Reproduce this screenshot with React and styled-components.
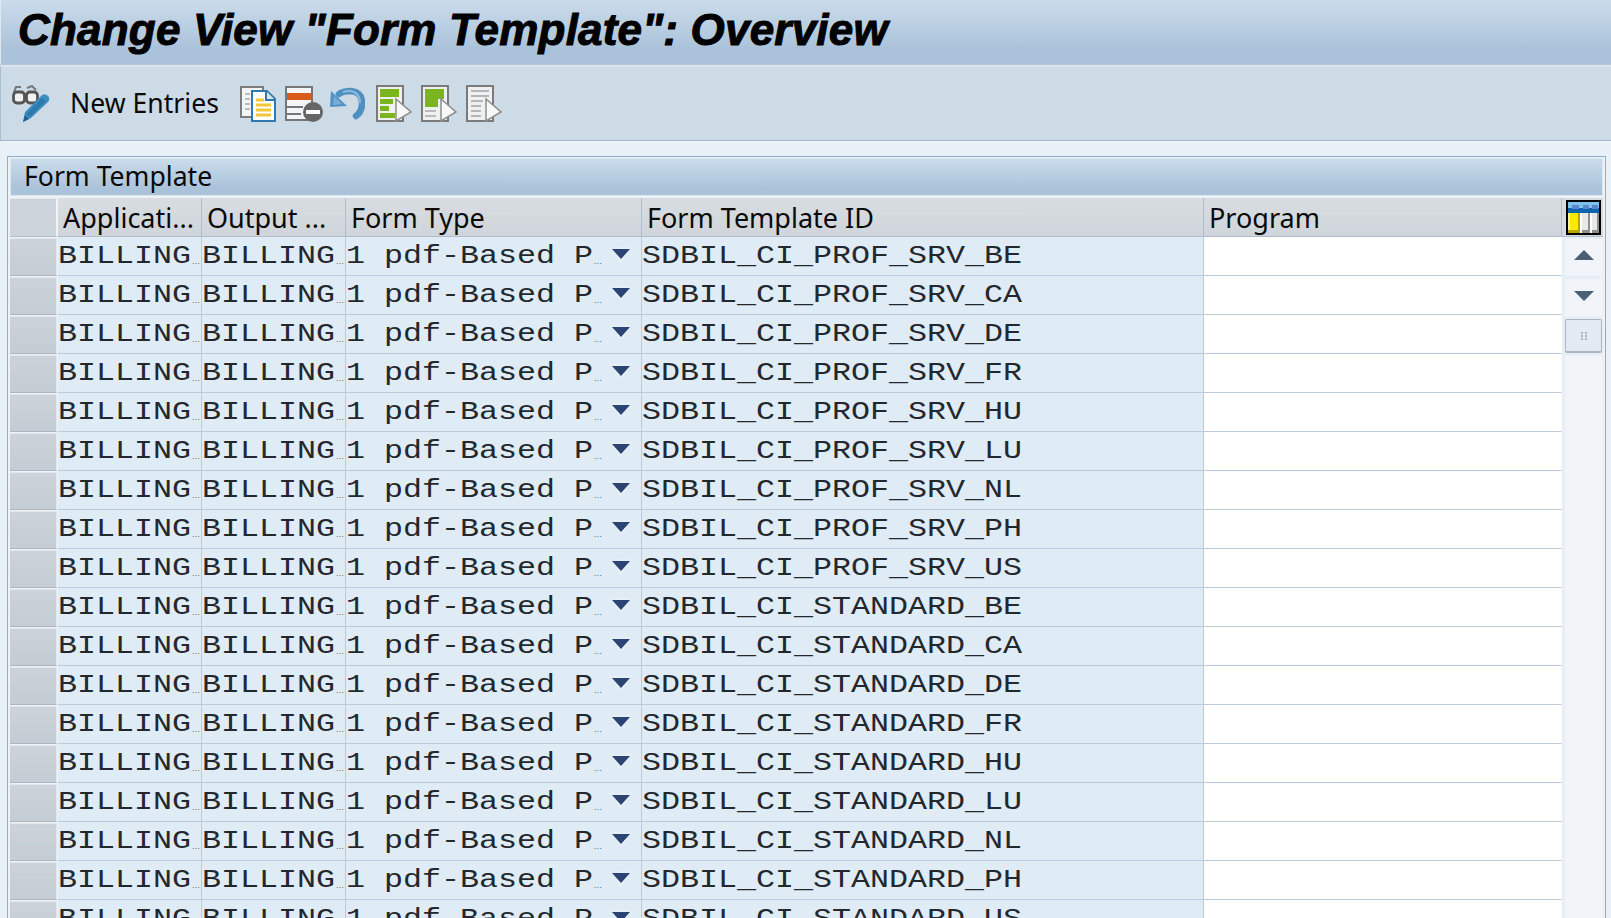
import styled, { createGlobalStyle } from "styled-components"

const countries = ["BE", "CA", "DE", "FR", "HU", "LU", "NL", "PH", "US"]
const templates = [
    ...countries.map(c => `SDBIL_CI_PROF_SRV_${c}`),
    ...countries.map(c => `SDBIL_CI_STANDARD_${c}`),
]

const GlassesIcon = () => (
    <svg width="38" height="38" viewBox="0 0 38 38">
        <path d="M2 7 L4 2 L9 2 M15 3 L20 1 L24 5" fill="none" stroke="#777" strokeWidth="2" />
        <rect x="1.5" y="7" width="11" height="11" rx="3.5" fill="#f1f1f1" stroke="#555" strokeWidth="2.8" />
        <rect x="14.5" y="7" width="11" height="11" rx="3.5" fill="#f1f1f1" stroke="#555" strokeWidth="2.8" />
        <path d="M12 10 H15" stroke="#555" strokeWidth="2.4" />
        <path d="M11 37 L13 27 L30 10 Q34 8 37 12 Q38 15 36 17 L19 33 Z" fill="#3f8ec2" />
        <path d="M14 29 L30 13 L34 16 L18 32 Z" fill="#2d78ac" />
        <path d="M11 37 L13 30 L17 34 Z" fill="#1d5f8e" />
    </svg>
)

const CopyIcon = () => (
    <svg width="36" height="36" viewBox="0 0 36 36">
        <path d="M1 1 H23 V6 H12 V31 H1 Z" fill="#f3f5f6" stroke="#7c7c7c" strokeWidth="2" />
        <path d="M5 8 H10 M5 13 H10 M5 18 H10 M5 23 H10" stroke="#bdbdbd" strokeWidth="2" />
        <path d="M12 5 H27 L35 13 V35 H12 Z" fill="#fff" stroke="#2f79b0" strokeWidth="2" />
        <path d="M26 5 V14 H35" fill="#d6e6f1" stroke="#2f79b0" strokeWidth="2" />
        <path d="M16 14 H24 M16 19 H31 M16 24 H31 M16 29 H31" stroke="#f4c63c" strokeWidth="3" />
    </svg>
)

const DeleteIcon = () => (
    <svg width="38" height="36" viewBox="0 0 38 36">
        <rect x="1" y="1" width="26" height="33" fill="#f4f5f6" stroke="#777" strokeWidth="2" />
        <rect x="2" y="7" width="24" height="7" fill="#d95b1c" />
        <path d="M2 21 H18 M2 28 H16" stroke="#777" strokeWidth="2" />
        <circle cx="28" cy="26" r="10" fill="#666" />
        <rect x="21" y="24" width="14" height="4" fill="#fff" />
    </svg>
)

const UndoIcon = () => (
    <svg width="36" height="36" viewBox="0 0 36 36">
        <path d="M10 8 Q14 5 22 5 Q33 6 33 17 Q33 26 27 30" fill="none" stroke="#4f8fc0" strokeWidth="6.5" strokeLinecap="round" />
        <path d="M14 6 Q20 4 25 6 Q31 9 31 17" fill="none" stroke="#8db9da" strokeWidth="2" />
        <path d="M1 21 L2 5 L18 20 Z" fill="#4f93c6" />
        <path d="M4 19 L5 10 L13 18 Z" fill="#78afd6" />
    </svg>
)

const SelectIcon = ({ $fill }) => (
    <svg width="36" height="37" viewBox="0 0 36 37">
        <rect x="1" y="1" width="26" height="35" fill="#eef0f1" stroke="#7a7a7a" strokeWidth="2" />
        {$fill === "all" && (
            <>
                <rect x="4" y="4" width="19" height="8" fill="#7ab51d" />
                <rect x="4" y="14" width="13" height="5" fill="#7ab51d" />
                <rect x="4" y="21" width="9" height="5" fill="#7ab51d" />
                <rect x="4" y="28" width="15" height="5" fill="#7ab51d" />
            </>
        )}
        {$fill === "block" && (
            <>
                <path d="M4 4 H23 V14 H17 V22 H4 Z" fill="#7ab51d" />
                <path d="M4 26 H15 M4 31 H15" stroke="#b9b9b9" strokeWidth="2" />
            </>
        )}
        {$fill === "none" && (
            <path d="M5 6 H23 M5 11 H23 M5 16 H17 M5 21 H15 M5 26 H15 M5 31 H15" stroke="#b5b5b5" strokeWidth="2" />
        )}
        <path d="M20 14 L35 27 L20 36 Z" fill="#f7f8f8" stroke="#8d8d8d" strokeWidth="1.5" />
    </svg>
)

const ColumnsIcon = () => (
    <svg width="35" height="35" viewBox="0 0 35 35" shapeRendering="crispEdges">
        <rect width="35" height="35" fill="#000" />
        <rect x="2" y="2" width="31" height="31" fill="#fff" />
        <rect x="2" y="2" width="31" height="8" fill="#7cc0ec" />
        <rect x="2" y="8" width="31" height="5" fill="#0e65ae" />
        <rect x="6" y="5" width="7" height="4" fill="#5b86c9" />
        <rect x="17" y="5" width="6" height="4" fill="#5b86c9" />
        <rect x="26" y="5" width="6" height="4" fill="#5b86c9" />
        <rect x="2" y="13" width="12" height="20" fill="#ffe800" />
        <rect x="2" y="13" width="2" height="20" fill="#f3f0a0" />
        <rect x="2" y="30" width="12" height="3" fill="#b8a400" />
        <rect x="12" y="13" width="2" height="20" fill="#b8a400" />
        <rect x="16" y="13" width="6" height="20" fill="#e6e8ea" />
        <rect x="22" y="13" width="2" height="20" fill="#8f8f8f" />
        <rect x="16" y="30" width="6" height="3" fill="#8f8f8f" />
        <rect x="26" y="13" width="5" height="20" fill="#e6e8ea" />
        <rect x="31" y="13" width="2" height="20" fill="#8f8f8f" />
        <rect x="26" y="30" width="5" height="3" fill="#8f8f8f" />
    </svg>
)

// the reference font is wider than Liberation Mono, so the glyphs get stretched to its 19px pitch
const MonoText = ({ children }) => (
    <Mono $chars={children.length}><Stretched>{children}</Stretched></Mono>
)

const App = () => {
    return (
        <Page>
            <GlobalStyle />
            <TitleBar>
                <Title>Change View "Form Template": Overview</Title>
            </TitleBar>
            <Toolbar>
                <ToolIcon $gap={20}><GlassesIcon /></ToolIcon>
                <ToolText>New Entries</ToolText>
                <ToolIcon $gap={9}><CopyIcon /></ToolIcon>
                <ToolIcon $gap={6}><DeleteIcon /></ToolIcon>
                <ToolIcon $gap={11}><UndoIcon /></ToolIcon>
                <ToolIcon $gap={9}><SelectIcon $fill="all" /></ToolIcon>
                <ToolIcon $gap={9}><SelectIcon $fill="block" /></ToolIcon>
                <ToolIcon><SelectIcon $fill="none" /></ToolIcon>
            </Toolbar>
            <Panel>
                <PanelTitle>Form Template</PanelTitle>
                <HeaderRow>
                    <Corner />
                    <HeadCell>Applicati...</HeadCell>
                    <HeadCell>Output ...</HeadCell>
                    <HeadCell>Form Type</HeadCell>
                    <HeadCell>Form Template ID</HeadCell>
                    <HeadCell>Program</HeadCell>
                    <ConfigCell><ColumnsIcon /></ConfigCell>
                </HeaderRow>
                <Body>
                    <Rows>
                        {templates.map(id => (
                            <Row key={id}>
                                <RowHead />
                                <Cell><MonoText>BILLING</MonoText><Dots>...</Dots></Cell>
                                <Cell><MonoText>BILLING</MonoText><Dots>...</Dots></Cell>
                                <Cell>
                                    <MonoText>1 pdf-Based P</MonoText><Dots>...</Dots>
                                    <Arrow viewBox="0 0 22 16">
                                        <path d="M0 0 H22 L11 16 Z" fill="#e6eef6" />
                                        <path d="M2 2 H20 L11 12 Z" fill="#2c4473" />
                                    </Arrow>
                                </Cell>
                                <Cell><MonoText>{id}</MonoText></Cell>
                                <Cell $white />
                            </Row>
                        ))}
                    </Rows>
                    <Scrollbar>
                        <ScrollButton $lift={5}>
                            <svg width="20" height="12" viewBox="0 0 20 12">
                                <path d="M10 1 L20 11 H0 Z" fill="#4a6074" />
                            </svg>
                        </ScrollButton>
                        <ScrollButton $lift={3}>
                            <svg width="20" height="12" viewBox="0 0 20 12">
                                <path d="M0 1 H20 L10 11 Z" fill="#4a6074" />
                            </svg>
                        </ScrollButton>
                        <Thumb>
                            <svg width="6" height="8" viewBox="0 0 6 8">
                                <path d="M0 0 H2 V2 H0 Z M4 0 H6 V2 H4 Z M0 3 H2 V5 H0 Z M4 3 H6 V5 H4 Z M0 6 H2 V8 H0 Z M4 6 H6 V8 H4 Z" fill="#a9b6c3" />
                            </svg>
                        </Thumb>
                        <Track />
                    </Scrollbar>
                </Body>
            </Panel>
        </Page>
    )
}

const GlobalStyle = createGlobalStyle`
    html, body {
        margin: 0;
        height: 100%;
        overflow: hidden;
        background: #e8f0f8;
    }
`

const Page = styled.div`
    height: 918px;
    overflow: hidden;
    font-family: "Noto Sans", "Open Sans", sans-serif;
    color: #0a0a0a;
    background: #e8f0f8;
`

const TitleBar = styled.div`
    height: 65px;
    box-sizing: border-box;
    padding: 0 0 5px 17px;
    display: flex;
    align-items: center;
    background: linear-gradient(#cbdceb, #abc3da 75%);
    border-left: 1px solid #dfe8f0;
    border-bottom: 1px solid #b4c6d8;
`

const Title = styled.h1`
    margin: 0;
    font-family: "Liberation Sans", Arial, sans-serif;
    font-size: 44px;
    font-weight: 700;
    font-style: italic;
    letter-spacing: 0.2px;
    white-space: nowrap;
    color: #000;
    -webkit-text-stroke: 1px #000;
`

const Toolbar = styled.div`
    height: 76px;
    box-sizing: border-box;
    padding-left: 11px;
    display: flex;
    align-items: center;
    background: #cddbe7;
    border-top: 2px solid #dde6ee;
    border-left: 1px solid #a9bfd3;
    border-bottom: 1px solid #a2b9ce;
`

const ToolIcon = styled.div`
    display: flex;
    margin-right: ${p => p.$gap || 0}px;
`

const ToolText = styled.span`
    font-size: 26.6px;
    margin: 0 21px 2px 0;
    white-space: nowrap;
`

const Panel = styled.div`
    margin: 15px 5px 0 7px;
    padding: 1px 2px 0;
    border: 1px solid #8eaccb;
    background: #edf2f7;
`

const PanelTitle = styled.div`
    height: 38px;
    box-sizing: border-box;
    padding: 0 0 2px 13px;
    display: flex;
    align-items: center;
    font-size: 26.6px;
    background: linear-gradient(#cbdceb, #abc3da 80%);
    border: 1px solid #dbe6ef;
`

const columns = "48px 144px 144px 296px 562px 1fr"

const HeaderRow = styled.div`
    display: grid;
    grid-template-columns: ${columns} 41px;
    height: 39px;
    margin-top: 2px;
`

const Corner = styled.div`
    background: #cdd3da;
    border-top: 1px solid #e6e9ec;
    border-right: 2px solid #f1f3f5;
    border-bottom: 1px solid #aebccb;
`

const HeadCell = styled.div`
    display: flex;
    align-items: center;
    padding-left: 5px;
    font-size: 27px;
    white-space: nowrap;
    overflow: hidden;
    background: linear-gradient(#d9dde1, #cfd5db);
    border-right: 1px solid #aebccb;
    border-bottom: 1px solid #aebccb;
`

const ConfigCell = styled.div`
    display: flex;
    justify-content: center;
    align-items: center;
    padding-left: 2px;
    background: #d4dae0;
    border-bottom: 1px solid #aebccb;
`

const Body = styled.div`
    display: flex;
`

const Rows = styled.div`
    flex: 1;
    min-width: 0;
`

const Row = styled.div`
    display: grid;
    grid-template-columns: ${columns};
    height: 39px;
`

const RowHead = styled.div`
    margin: 1px 1px 0 0;
    background: linear-gradient(#ccd3da, #c4ccd4);
    border-top: 1px solid #e2e6ea;
    border-bottom: 1px solid #a9b6c3;
    border-right: 1px solid #e2e6ea;
`

const Cell = styled.div`
    display: flex;
    align-items: center;
    overflow: hidden;
    white-space: pre;
    font-family: "Liberation Mono", "Courier New", monospace;
    font-size: 26px;
    color: #23282e;
    background: ${p => (p.$white ? "#fff" : "#dfebf5")};
    border-right: 1px solid ${p => (p.$white ? "#fff" : "#bccbd9")};
    border-bottom: 1px solid #bccbd9;
`

const Mono = styled.span`
    display: inline-block;
    width: ${p => p.$chars * 19}px;
    flex-shrink: 0;
`

const Stretched = styled.span`
    display: inline-block;
    transform: scaleX(1.218);
    transform-origin: 0 50%;
`

const Dots = styled.span`
    align-self: flex-end;
    margin: 0 0 9px 1px;
    font-family: "Liberation Sans", sans-serif;
    font-size: 8px;
    letter-spacing: 0.5px;
`

const Arrow = styled.svg`
    width: 22px;
    height: 16px;
    margin-left: 8px;
    margin-bottom: 2px;
    flex-shrink: 0;
`

const Scrollbar = styled.div`
    width: 41px;
    box-sizing: border-box;
    padding: 2px 1px 0 3px;
    display: flex;
    flex-direction: column;
    gap: 3px;
    background: #e8eef5;
`

const ScrollButton = styled.div`
    height: 37px;
    box-sizing: border-box;
    padding-bottom: ${p => p.$lift}px;
    display: flex;
    justify-content: center;
    align-items: center;
    background: #f1f5fa;
`

const Thumb = styled.div`
    height: 34px;
    box-sizing: border-box;
    display: flex;
    justify-content: center;
    align-items: center;
    background: #e2ebf3;
    border: 1px solid #aab7c3;
    border-bottom-width: 2px;
    border-radius: 2px;
`

const Track = styled.div`
    flex: 1;
    background: #f1f5fa;
`

export default App
